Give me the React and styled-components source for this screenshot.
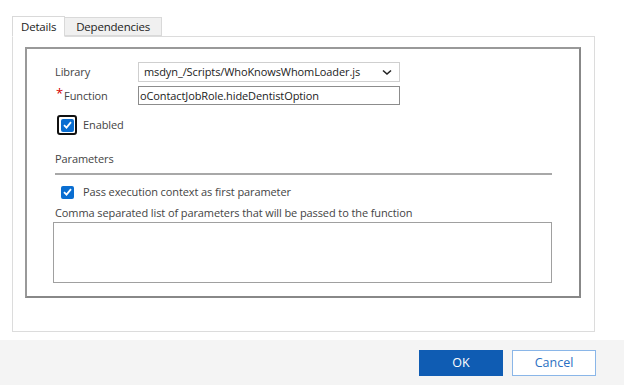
import React from "react";
import styled, { createGlobalStyle } from "styled-components";

const GlobalStyle = createGlobalStyle`
  html, body {
    margin: 0;
    padding: 0;
    background: #fff;
  }
  body {
    font-family: "Segoe UI", "Open Sans", "Noto Sans", sans-serif;
    font-size: 11px;
    letter-spacing: -0.1px;
    line-height: 16px;
    color: #333;
  }
`;

const Page = styled.div`
  width: 624px;
  height: 385px;
  display: flex;
  flex-direction: column;
  overflow: hidden;
`;

const Body = styled.div`
  padding: 15px 29px 0 12px;
`;

const Tabs = styled.div`
  display: flex;
  align-items: flex-end;
  height: 21px;
  position: relative;
  z-index: 1;
`;

const Tab = styled.div`
  box-sizing: border-box;
  height: ${(p) => (p.$active ? "21px" : "19px")};
  padding: 0 ${(p) => (p.$active ? "8px" : "11px")};
  margin-bottom: ${(p) => (p.$active ? "-1px" : "0")};
  background: ${(p) => (p.$active ? "#fff" : "#f0f0f0")};
  border: 1px solid #d9d9d9;
  border-bottom: ${(p) => (p.$active ? "1px solid #fff" : "1px solid #d9d9d9")};
  border-left: ${(p) => (p.$active ? "1px solid #d9d9d9" : "none")};
  display: flex;
  align-items: center;
  color: #222;
  font-size: 11.5px;
  letter-spacing: -0.2px;
`;

const Panel = styled.div`
  border: 1px solid #dcdcdc;
  padding: 10px 13px 33px 12px;
`;

const GroupBox = styled.div`
  box-sizing: border-box;
  height: 251px;
  border: 2px solid #999;
  border-right-color: #888;
  border-bottom-color: #888;
  padding: 13px 27px 0 28px;
`;

const FormGrid = styled.div`
  display: grid;
  grid-template-columns: 83px 262px;
  row-gap: 4px;
  align-items: center;
`;

const Label = styled.label`
  color: #444;
  display: flex;
  align-items: flex-start;
`;

const Required = styled.span`
  color: #d40000;
  font-size: 13px;
  line-height: 10px;
  margin: 0 1px 0 1px;
`;

const Select = styled.div`
  box-sizing: border-box;
  height: 20px;
  border: 1px solid #cfcfcf;
  display: flex;
  align-items: center;
  justify-content: space-between;
  padding: 0 7px 0 5px;
  color: #222;
`;

const TextInput = styled.div`
  box-sizing: border-box;
  height: 19px;
  border: 1px solid #8c8c8c;
  display: flex;
  align-items: center;
  padding: 0 1px;
  color: #222;
`;

const CheckRow = styled.div`
  display: flex;
  align-items: center;
  gap: 6px;
  margin: ${(p) => p.$margin || "0"};
  color: #444;
`;

const FocusRing = styled.span`
  box-sizing: border-box;
  width: 20px;
  height: 20px;
  border: 2px solid #111;
  border-radius: 3px;
  display: flex;
  align-items: center;
  justify-content: center;
`;

const CheckBox = styled.span`
  box-sizing: border-box;
  width: 13px;
  height: 13px;
  border-radius: 2px;
  background: #0a6ed1;
  display: flex;
  align-items: center;
  justify-content: center;
`;

const SectionTitle = styled.div`
  color: #444;
  margin-top: 16px;
  padding-bottom: 6px;
  border-bottom: 2px solid #a8a8a8;
`;

const Hint = styled.div`
  color: #444;
  margin-top: 5px;
`;

const TextArea = styled.div`
  box-sizing: border-box;
  width: 499px;
  height: 61px;
  margin: 1px 0 0 -2px;
  border: 1px solid #a0a0a0;
`;

const Footer = styled.div`
  margin-top: auto;
  height: 45px;
  background: #f4f4f4;
  display: flex;
  justify-content: flex-end;
  align-items: center;
  gap: 9px;
  padding-right: 28px;
`;

const Button = styled.button`
  box-sizing: border-box;
  width: 84px;
  height: 26px;
  font-family: inherit;
  font-size: 12.5px;
  border: 1px solid ${(p) => (p.$primary ? "#0f5cb3" : "#8ab6e8")};
  background: ${(p) => (p.$primary ? "#0f5cb3" : "#fff")};
  color: ${(p) => (p.$primary ? "#fff" : "#2a6fc2")};
  padding: 0;
`;

function Check() {
  return (
    <CheckBox>
      <svg width="9" height="8" viewBox="0 0 9 8">
        <path d="M1 4.2 L3.5 6.6 L8 1.2" fill="none" stroke="#fff" strokeWidth="1.8" />
      </svg>
    </CheckBox>
  );
}

function App() {
  return (
    <Page>
      <GlobalStyle />
      <Body>
        <Tabs>
          <Tab $active>Details</Tab>
          <Tab>Dependencies</Tab>
        </Tabs>
        <Panel>
          <GroupBox>
            <FormGrid>
              <Label>Library</Label>
              <Select>
                <span>msdyn_/Scripts/WhoKnowsWhomLoader.js</span>
                <svg width="10" height="7" viewBox="0 0 10 7">
                  <path d="M1 1.5 L5 5 L9 1.5" fill="none" stroke="#222" strokeWidth="1.6" />
                </svg>
              </Select>
              <Label>
                <Required>*</Required>Function
              </Label>
              <TextInput>oContactJobRole.hideDentistOption</TextInput>
            </FormGrid>
            <CheckRow $margin="10px 0 0 2px">
              <FocusRing>
                <Check />
              </FocusRing>
              <span>Enabled</span>
            </CheckRow>
            <SectionTitle>Parameters</SectionTitle>
            <CheckRow $margin="9px 0 0 6px">
              <Check />
              <span style={{ marginLeft: 3 }}>Pass execution context as first parameter</span>
            </CheckRow>
            <Hint>Comma separated list of parameters that will be passed to the function</Hint>
            <TextArea />
          </GroupBox>
        </Panel>
      </Body>
      <Footer>
        <Button $primary>OK</Button>
        <Button>Cancel</Button>
      </Footer>
    </Page>
  );
}

export default App;
